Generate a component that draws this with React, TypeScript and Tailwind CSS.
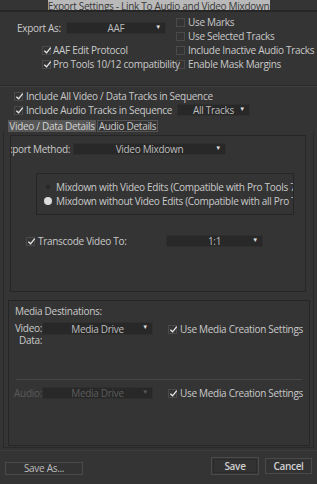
import React from 'react'

const font = { fontFamily: '"Open Sans", "Noto Sans", sans-serif' }

function Check({ on, dim }: { on?: boolean; dim?: boolean }) {
    return (
        <span className={`relative inline-flex w-[9px] h-[9px] shrink-0 border ${dim ? 'border-[#3e3e3e]' : 'border-[#4a4a4a]'}`}>
            {on && (
                <svg viewBox="0 0 10 10" className="absolute left-[0px] top-[-1px] w-[9px] h-[9px]">
                    <path d="M1.5 5.2 L4 7.6 L8.6 1.8" stroke="#e6e6e6" strokeWidth="1.5" fill="none" />
                </svg>
            )}
        </span>
    )
}

function Select({ text, w, dim }: { text: string; w: string; dim?: boolean }) {
    return (
        <div className={`relative shrink-0 ${w} h-[12px] bg-[#282828] border border-[#2f2f2f] flex items-center justify-center ${dim ? 'text-[#5c5c5c]' : 'text-[#bdbdbd]'}`}>
            <span className="leading-none">{text}</span>
            <span className={`absolute right-[4px] top-[0px] text-[6px] leading-[8px] ${dim ? 'text-[#5c5c5c]' : 'text-[#e0e0e0]'}`}>▼</span>
        </div>
    )
}

function Row({ on, label, className = '' }: { on?: boolean; label: string; className?: string }) {
    return (
        <div className={`flex items-center h-[14px] gap-[3px] whitespace-nowrap ${className}`}>
            <Check on={on} />
            <span>{label}</span>
        </div>
    )
}

export default function App() {
    return (
        <div style={font} className="w-[317px] h-[484px] bg-[#343434] text-[#c9c9c9] text-[10px] tracking-[-0.3px] leading-none flex flex-col overflow-hidden select-none">
            {/* title */}
            <div className="h-[10px] flex justify-center">
                <div className="w-[222px] h-[10px] bg-[#b9b9b9] text-[#3a3a3a] flex items-end justify-center overflow-hidden whitespace-nowrap">
                    <span className="leading-[10px] mb-[-1px]">Export Settings - Link To Audio and Video Mixdown</span>
                </div>
            </div>
            <div className="h-[2px] bg-[#262626]" />

            {/* top options */}
            <div className="flex pt-[3px] h-[73px]">
                <div className="w-[176px] flex flex-col relative z-10">
                    <div className="flex items-center h-[28px] pl-[17px] gap-[5px] whitespace-nowrap pb-[2px]">
                        <span>Export As:</span>
                        <Select text="AAF" w="w-[100px]" />
                    </div>
                    <Row on label="AAF Edit Protocol" className="pl-[42px] !gap-[2px]" />
                    <Row on label="Pro Tools 10/12 compatibility" className="pl-[42px] !gap-[2px]" />
                </div>
                <div className="flex flex-col">
                    <Row label="Use Marks" />
                    <Row label="Use Selected Tracks" />
                    <Row label="Include Inactive Audio Tracks" />
                    <Row label="Enable Mask Margins" />
                </div>
            </div>
            <div className="h-[1px] bg-[#2a2a2a]" />
            <div className="h-[1px] bg-[#3d3d3d]" />

            {/* sequence options */}
            <div className="pl-[14px] pt-[2px] flex flex-col">
                <Row on label="Include All Video / Data Tracks in Sequence" />
                <div className="flex items-center h-[14px]">
                    <Row on label="Include Audio Tracks in Sequence" className="w-[163px]" />
                    <Select text="All Tracks" w="w-[73px]" />
                </div>
            </div>

            {/* tabs */}
            <div className="flex pl-[8px] mt-[3px] h-[12px] whitespace-nowrap">
                <div className="w-[88px] bg-[#575757] text-[#d2d2d2] flex items-center justify-center">Video / Data Details</div>
                <div className="w-[61px] ml-[1px] border border-[#545454] flex items-center justify-center">Audio Details</div>
            </div>

            {/* frame */}
            <div className="mx-[3px] flex-none h-[316px] border-x border-b border-[#292929] flex flex-col">
                {/* tab content */}
                <div className="ml-[6px] mr-[7px] mt-[3px] h-[157px] border border-[#262626] overflow-hidden flex flex-col">
                    <div className="flex items-center h-[12px] mt-[7px] whitespace-nowrap">
                        <span className="ml-[-9px] w-[71px] shrink-0">Export Method:</span>
                        <Select text="Video Mixdown" w="w-[153px]" />
                    </div>
                    <div className="ml-[25px] w-[258px] mt-[18px] h-[42px] border border-[#252525] overflow-hidden flex flex-col justify-center pl-[7px] whitespace-nowrap">
                        <div className="flex items-center h-[14px] gap-[4px]">
                            <span className="shrink-0 w-[8px] h-[8px] rounded-full bg-[#2b2b2b] border border-[#3d3d3d]" />
                            <span>Mixdown with Video Edits (Compatible with Pro Tools 7</span>
                        </div>
                        <div className="flex items-center h-[14px] gap-[4px]">
                            <span className="shrink-0 w-[8px] h-[8px] rounded-full bg-[#dcdcdc]" />
                            <span>Mixdown without Video Edits (Compatible with all Pro Tools)</span>
                        </div>
                    </div>
                    <div className="flex items-center h-[12px] mt-[20px] whitespace-nowrap">
                        <Row on label="Transcode Video To:" className="pl-[15px] w-[155px] shrink-0" />
                        <Select text="1:1" w="w-[97px]" />
                    </div>
                </div>

                {/* media destinations */}
                <div className="ml-[4px] mr-[3px] mt-[8px] h-[146px] border border-[#262626] flex flex-col">
                    <div className="pl-[6px] mt-[4px] h-[12px] flex items-center">Media Destinations:</div>
                    <div className="flex mt-[5px]">
                        <div className="w-[33px] flex flex-col items-end leading-[12px]">
                            <span>Video:</span>
                            <span>Data:</span>
                        </div>
                        <Select text="Media Drive" w="w-[111px] h-[13px]" />
                        <Row on label="Use Media Creation Settings" className="ml-[15px] h-[12px]" />
                    </div>
                    <div className="mx-[7px] mt-[33px] h-[1px] bg-[#464646]" />
                    <div className="flex mt-[6px] items-center">
                        <div className="w-[33px] text-right text-[#5a5a5a]">Audio:</div>
                        <Select text="Media Drive" w="w-[111px]" dim />
                        <Row on label="Use Media Creation Settings" className="ml-[15px] h-[12px]" />
                    </div>
                </div>
            </div>

            <div className="h-[1px] bg-[#3c3c3c] mt-[2px]" />

            {/* footer */}
            <div className="flex items-center px-[5px] pt-[6px] justify-between">
                <div className="w-[78px] h-[13px] border border-[#4a4a4a] bg-[#333] text-[#bdbdbd] flex items-center justify-center mt-[4px]">Save As...</div>
                <div className="flex gap-[6px] items-center">
                    <div className="w-[48px] h-[18px] border border-[#4a4a4a] p-[1px] flex">
                        <div className="flex-1 border border-[#2a2a2a] bg-[#323232] text-[#d0d0d0] font-semibold flex items-center justify-center">Save</div>
                    </div>
                    <div className="w-[47px] h-[16px] border border-[#4a4a4a] bg-[#323232] text-[#d0d0d0] font-semibold flex items-center justify-center">Cancel</div>
                </div>
            </div>
        </div>
    )
}
